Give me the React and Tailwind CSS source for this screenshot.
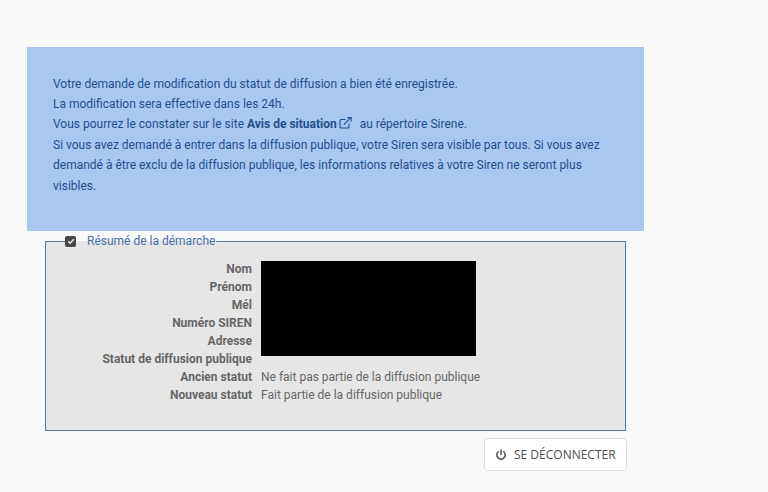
import React from "react";

const labels = ["Nom", "Prénom", "Mél", "Numéro SIREN", "Adresse", "Statut de diffusion publique"];

function ExternalLink() {
  return (
    <svg width="13" height="12" viewBox="0 0 13 12" fill="none" stroke="#1f4e8c" strokeWidth="1.1" className="inline-block ml-[2px] align-[-1px]">
      <path d="M10 6.5V10a1 1 0 0 1-1 1H2a1 1 0 0 1-1-1V3.5a1 1 0 0 1 1-1h4.5" />
      <path d="M4.8 7.7l7-7M8.3.6h3.9v3.9" />
    </svg>
  );
}

export default function App() {
  return (
    <div className="w-[768px] h-[492px] overflow-hidden bg-[#f9f9f9] pt-[47px] pl-[27px] font-['Roboto',sans-serif] text-[12px]">
      <div className="w-[617px] h-[184px] bg-[#a9c8f0] pt-[26.6px] px-[26px] text-[#1f4e8c] leading-[20.4px]">
        <p>Votre demande de modification du statut de diffusion a bien été enregistrée.</p>
        <p>La modification sera effective dans les 24h.</p>
        <p>
          Vous pourrez le constater sur le site <b className="font-bold">Avis de situation</b>
          <ExternalLink />
          <span className="ml-[5px]"> au répertoire Sirene.</span>
        </p>
        <p>
          Si vous avez demandé à entrer dans la diffusion publique, votre Siren sera visible par tous. Si vous avez demandé à être exclu de la diffusion publique, les informations relatives à votre Siren ne seront plus visibles.
        </p>
      </div>

      <fieldset className="ml-[18px] mt-[3px] w-[581px] h-[197px] border border-[#5676a6] bg-[#e6e6e6]">
        <legend className="ml-[19px] flex items-center h-[14px] pr-[1px] text-[#4a6fa5]">
          <span className="w-[11px] h-[11px] rounded-[2px] bg-[#474747] flex items-center justify-center mr-[11px]">
            <svg width="8" height="8" viewBox="0 0 8 8" fill="none" stroke="#e6e6e6" strokeWidth="1.6">
              <path d="M1.2 4.2l2 2 3.6-4" />
            </svg>
          </span>
          Résumé de la démarche
        </legend>
        <div className="mt-[12px] grid grid-cols-[206px_auto] justify-start gap-x-[9px] auto-rows-[18px] leading-[18px] text-[#666666]">
          {labels.map((l, i) => (
            <div key={l} className="col-start-1 text-right font-bold" style={{ gridRowStart: i + 1 }}>{l}</div>
          ))}
          <div className="col-start-2 row-start-1 row-span-6 w-[215px] h-[95px] mt-[1px] bg-black" />
          <div className="col-start-1 text-right font-bold">Ancien statut</div>
          <div className="col-start-2">Ne fait pas partie de la diffusion publique</div>
          <div className="col-start-1 text-right font-bold">Nouveau statut</div>
          <div className="col-start-2">Fait partie de la diffusion publique</div>
        </div>
      </fieldset>

      <div className="w-[600px] flex justify-end mt-[7px]">
        <button className="w-[143px] h-[33px] bg-white border border-[#dddddd] rounded-[4px] flex items-center pl-[10px] gap-[7px] text-[#4d4d4d] font-['Open_Sans',sans-serif] text-[12px]">
          <svg width="12" height="12" viewBox="0 0 12 12" fill="none" stroke="#4d4d4d" strokeWidth="1.5" strokeLinecap="round">
            <path d="M6 1v4.5" />
            <path d="M3.2 2.8a4.2 4.2 0 1 0 5.6 0" />
          </svg>
          SE DÉCONNECTER
        </button>
      </div>
    </div>
  );
}
